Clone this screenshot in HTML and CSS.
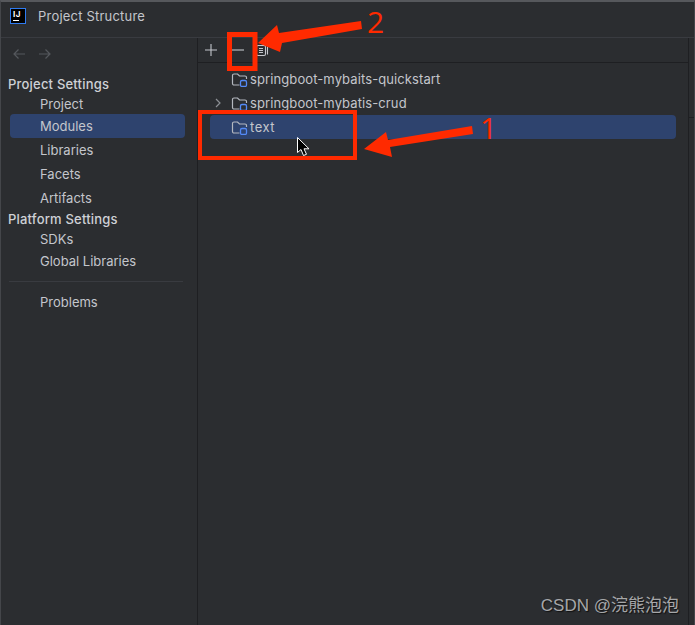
FILE: index.html
```html
<!DOCTYPE html>
<html lang="en">
<head>
	<meta charset="UTF-8">
	<title>Project Structure</title>
	<link rel="stylesheet" href="styles.css">
</head>
<body>
	<section class="window">
		<header class="titlebar">
			<span class="logo"><b>IJ</b><i></i></span>
			<span class="title">Project Structure</span>
		</header>
		<div class="content">
			<aside class="sidebar">
				<div class="history">
					<svg width="16" height="16" viewBox="0 0 16 16"><path d="M14 8H3M7.500 3.500 3 8l4.500 4.500"/></svg>
					<svg width="16" height="16" viewBox="0 0 16 16"><path d="M2 8h11M8.500 3.500 13 8l-4.500 4.500"/></svg>
				</div>
				<h3 class="group">Project Settings</h3>
				<a class="item short">Project</a>
				<a class="item active">Modules</a>
				<a class="item">Libraries</a>
				<a class="item">Facets</a>
				<a class="item">Artifacts</a>
				<h3 class="group">Platform Settings</h3>
				<a class="item short">SDKs</a>
				<a class="item short">Global Libraries</a>
				<hr class="divider">
				<a class="item short">Problems</a>
			</aside>
			<main class="main">
				<div class="toolbar">
					<svg width="16" height="16" viewBox="0 0 16 16"><path d="M8 2v12M2 8h12"/></svg>
					<svg width="16" height="16" viewBox="0 0 16 16"><path d="M2 8h12"/></svg>
					<svg class="copy" width="16" height="16" viewBox="0 0 16 16"><rect x="2.500" y="3.500" width="9" height="10" rx="1.500"/><path d="M13.500 4.500v8M5 6.500h4M5 8.500h4M5 10.500h4"/></svg>
				</div>
				<ul class="tree">
					<li class="row">
						<svg class="folder" width="18" height="16" viewBox="0 0 18 16"><path d="M8.500 14H3A1.500 1.500 0 0 1 1.500 12.500V4.500A1.500 1.500 0 0 1 3 3h3.500l2 2H14a1.500 1.500 0 0 1 1.500 1.500V8"/><rect class="badge" x="9.500" y="9.500" width="6" height="6" rx="1.500"/></svg>
						<span>springboot-mybaits-quickstart</span>
					</li>
					<li class="row">
						<svg class="chevron" width="10" height="10" viewBox="0 0 10 10"><path d="M3 1l4 4-4 4"/></svg>
						<svg class="folder" width="18" height="16" viewBox="0 0 18 16"><path d="M8.500 14H3A1.500 1.500 0 0 1 1.500 12.500V4.500A1.500 1.500 0 0 1 3 3h3.500l2 2H14a1.500 1.500 0 0 1 1.500 1.500V8"/><rect class="badge" x="9.500" y="9.500" width="6" height="6" rx="1.500"/></svg>
						<span>springboot-mybatis-crud</span>
					</li>
					<li class="row selected">
						<svg class="folder" width="18" height="16" viewBox="0 0 18 16"><path d="M8.500 14H3A1.500 1.500 0 0 1 1.500 12.500V4.500A1.500 1.500 0 0 1 3 3h3.500l2 2H14a1.500 1.500 0 0 1 1.500 1.500V8"/><rect class="badge" x="9.500" y="9.500" width="6" height="6" rx="1.500"/></svg>
						<span class="wide">text</span>
					</li>
				</ul>
			</main>
			<div class="strip"><i></i></div>
		</div>
		<!-- red marks drawn over the screenshot -->
		<svg class="marks" width="695" height="625" viewBox="0 0 695 625">
			<rect class="box" x="229.500" y="34.500" width="25.500" height="34"/>
			<rect class="box thin" x="200" y="112" width="155" height="46"/>
			<path class="arrow" d="M361 21 362 29 282 43 280 52 258 43 277 25 279 33Z"/>
			<path class="arrow" d="M472 126 473 134 390 147 392 157 364 149 386 132 388 140Z"/>
			<text class="num" x="367" y="33">2</text>
			<text class="num" x="480" y="139">1</text>
			<path class="cursor" d="M297.500 137.500v15l3.500-3 2.500 6 3-1.200-2.500-5.500h5Z"/>
		</svg>
		<div class="watermark">CSDN @浣熊泡泡</div>
	</section>
</body>
</html>
```
FILE: styles.css
```css
*{margin: 0; padding: 0; box-sizing: border-box;}
li{list-style: none;}
body{background: #2b2d30; font-family: Inter, "Liberation Sans", sans-serif; font-size: 13px; color: #c4c6cc;}
svg{display: block;}

.window{width: 695px; height: 625px; position: relative; overflow: hidden; display: flex; flex-direction: column; background: #2b2d30; border-top: 2px solid #56585c; border-left: 1px solid #44464a; border-right: 1px solid #44464a;}

.titlebar{height: 36px; flex: none; display: flex; align-items: center; padding-bottom: 7px; border-bottom: 1px solid #393b40;}
.logo{width: 16px; height: 16px; margin-left: 9px; position: relative; background: #000; border: 1px solid #2f7bf0; display: block;}
.logo b{display: block; font-size: 8px; line-height: 8px; color: #fff; font-weight: 700; padding-left: 2px; padding-top: 1px; letter-spacing: .5px;}
.logo i{position: absolute; left: 2px; bottom: 2px; width: 6px; height: 1px; background: #fff;}
.title{margin-left: 12px; letter-spacing: .2px;}

.content{flex: 1; display: flex; min-height: 0;}

.sidebar{width: 197px; flex: none; border-right: 1px solid #1e1f22; display: flex; flex-direction: column;}
.history{height: 37px; padding-left: 10px; padding-top: 8px; display: flex; gap: 10px;}
.history path{fill: none; stroke: #55585d; stroke-width: 1.2;}
.group{height: 18px; line-height: 18px; font-size: 13px; font-weight: 500; padding-left: 7px; color: #cfd1d6; letter-spacing: .2px;}
.item{display: block; height: 24px; line-height: 24px; padding-left: 39px; margin-right: 12px;}
.item.short{height: 22px; line-height: 22px;}
.item.active{margin-left: 9px; margin-top: -1px; padding-left: 30px; background: #2e436e; border-radius: 4px;}
.divider{border: 0; height: 1px; background: #393b40; margin: 9px 14px 9px 8px;}

.main{flex: 1; min-width: 0;}
.toolbar{height: 25px; padding-left: 5px; display: flex; align-items: center; gap: 11px; border-bottom: 1px solid #1e1f22;}
.toolbar path, .toolbar rect{fill: none; stroke: #c4c6cc; stroke-width: 1.1;}
.toolbar .copy{margin-left: -3px;}
.tree{padding: 4px 12px 0 12px;}
.row{height: 24px; display: flex; align-items: center; padding-left: 21px; position: relative; letter-spacing: .1px;}
.row span{margin-left: 1px;}
.row .wide{letter-spacing: .5px;}
.row.selected{background: #2e436e; border-radius: 4px;}
.folder path{fill: none; stroke: #b4b8bf; stroke-width: 1.2;}
.folder .badge{fill: none; stroke: #548af7; stroke-width: 1.300;}
.chevron{position: absolute; left: 3px; top: 7px;}
.chevron path{fill: none; stroke: #8c8f94; stroke-width: 1.200;}

.strip{width: 6px; flex: none; border-left: 1px solid #1e1f22;}
.strip i{display: block; height: 1px; margin-top: 79px; background: #1e1f22;}

.marks{position: absolute; left: -1px; top: -2px;}
.box{fill: none; stroke: #ff2a00; stroke-width: 5;}
.box.thin{stroke-width: 4;}
.arrow{fill: #ff2a00;}
.num{fill: #ff2a00; font-family: "Open Sans", sans-serif; font-weight: 400; font-size: 30px;}
.cursor{fill: #000; stroke: #fff; stroke-width: 1;}

.watermark{position: absolute; right: 15px; top: 594px; font-family: "Liberation Sans", "Noto Sans CJK SC", sans-serif; font-size: 17px; line-height: 20px; color: #a6a7a9; text-shadow: 1px 1px 1px #111;}
```
